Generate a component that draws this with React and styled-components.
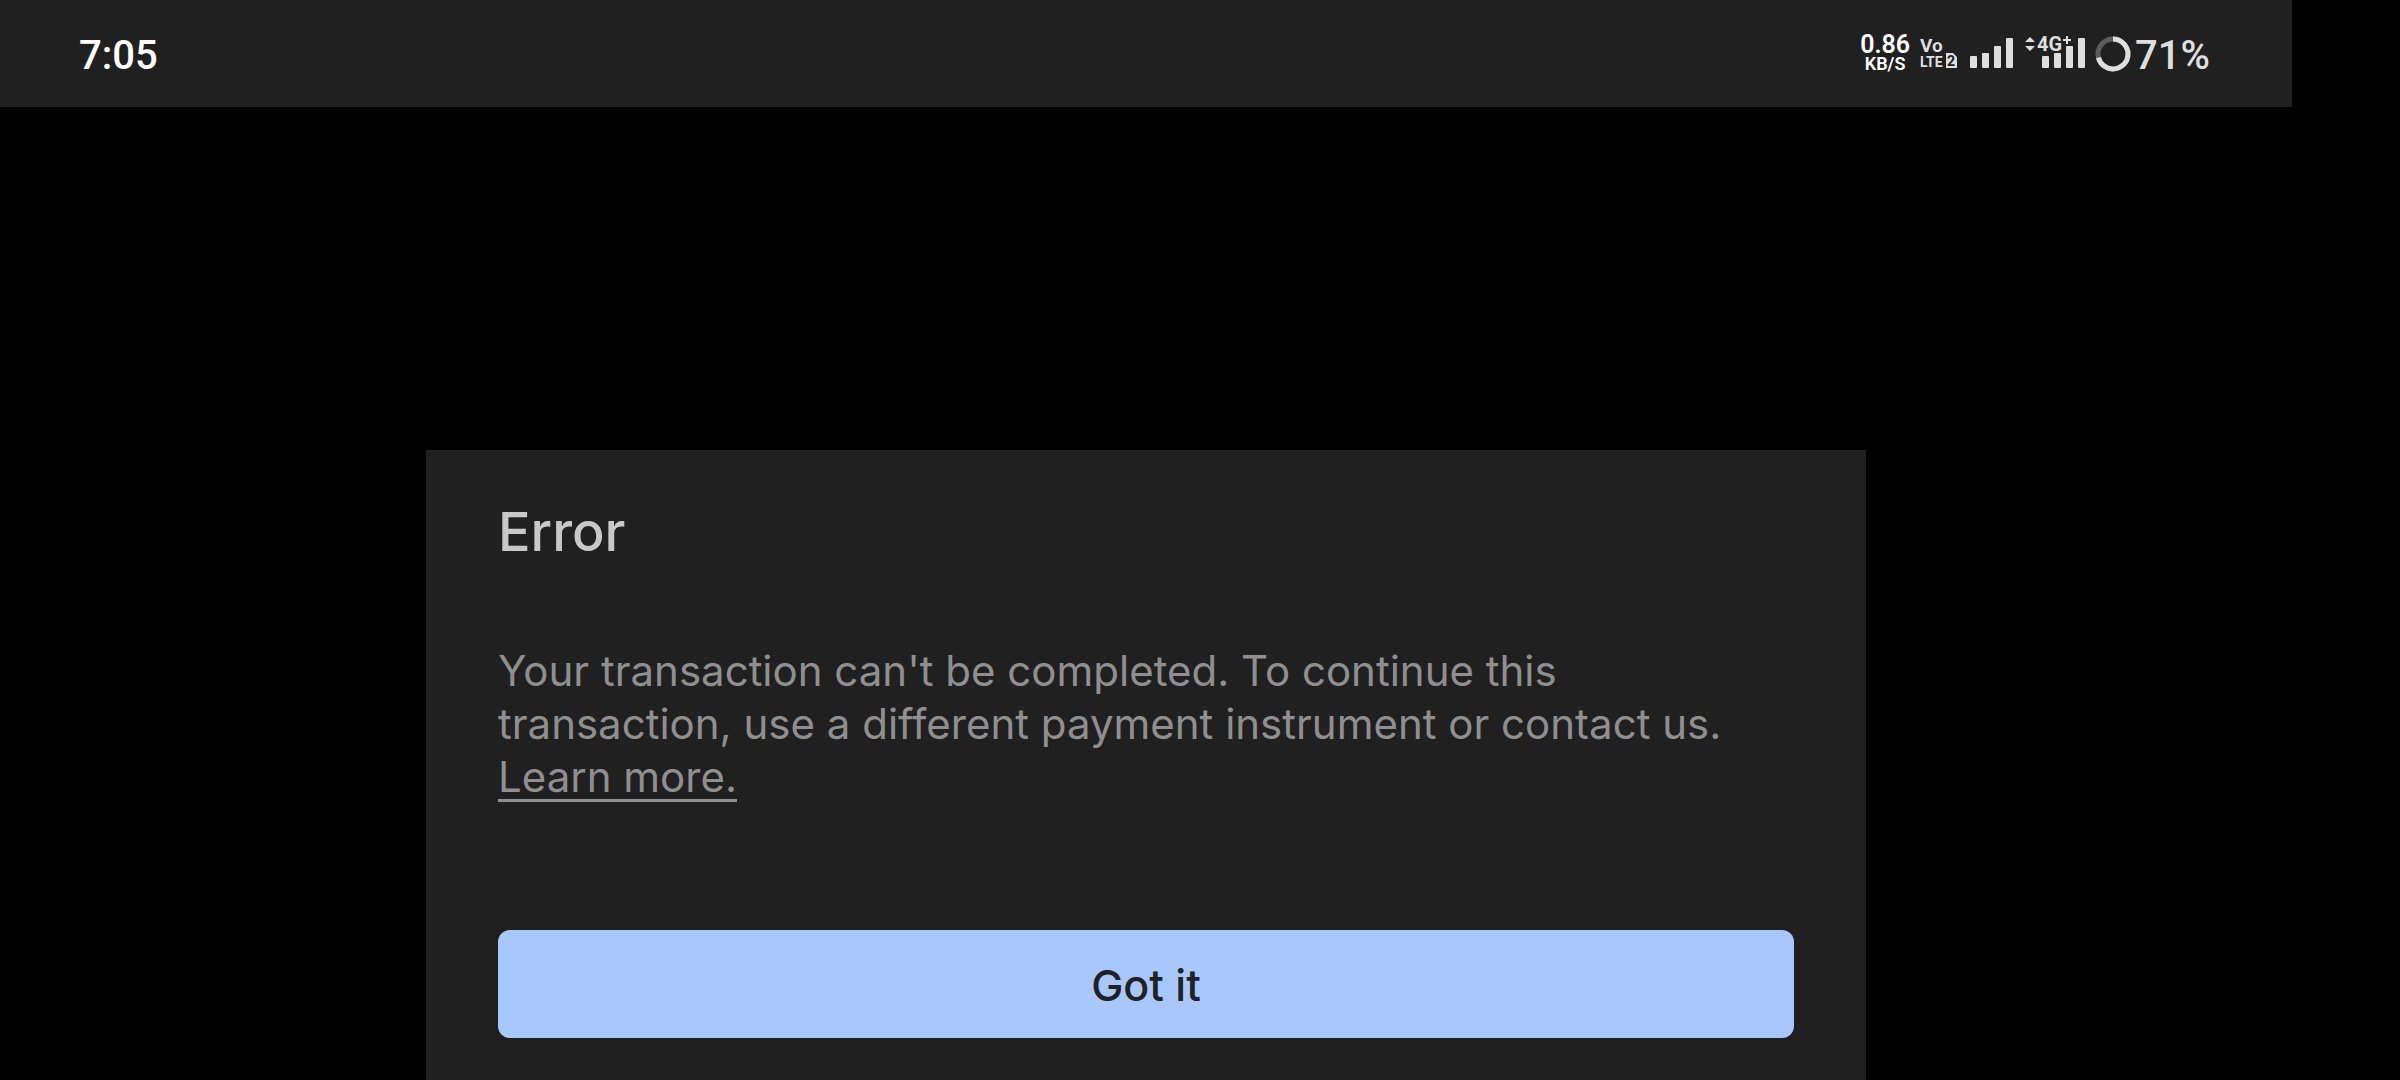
import React from 'react';
import styled, { createGlobalStyle } from 'styled-components';

const GlobalStyle = createGlobalStyle`
  * {
    box-sizing: border-box;
  }

  body {
    margin: 0;
    background: #000;
    font-family: Roboto, 'Liberation Sans', sans-serif;
  }
`;

const Screen = styled.div`
  display: flex;
  flex-direction: column;
  min-height: 100vh;
  padding-right: 108px;
  background: #000;
`;

const StatusBar = styled.header`
  display: flex;
  align-items: center;
  justify-content: space-between;
  height: 107px;
  padding: 5px 82px 0 79px;
  background: #202020;
`;

const Clock = styled.time`
  font-size: 40px;
  line-height: 48px;
  font-weight: 500;
  color: #fff;
`;

const StatusIcons = styled.div`
  display: flex;
  align-items: center;
  gap: 10px;
  color: #dedede;
`;

const Speed = styled.div`
  display: flex;
  flex-direction: column;
  align-items: center;
  padding-bottom: 4px;
  font-weight: 600;
  color: #fff;
`;

const SpeedValue = styled.span`
  font-size: 25px;
  line-height: 20px;
`;

const SpeedUnit = styled.span`
  font-size: 18px;
  line-height: 18px;
`;

const Glyph = styled.svg`
  display: block;
  flex: none;
  fill: currentColor;
`;

const GlyphText = styled.text`
  font-size: ${(props) => props.$size}px;
  font-weight: 700;
`;

const Battery = styled.div`
  display: flex;
  align-items: center;
  gap: 4px;
  font-size: 40px;
  line-height: 48px;
  font-weight: 500;
`;

const Main = styled.main`
  display: flex;
  flex: 1;
  justify-content: center;
  padding-top: 343px;
`;

const Dialog = styled.section`
  display: flex;
  flex-direction: column;
  width: 100%;
  max-width: 1440px;
  padding: 48px 72px 42px;
  background: #202020;
  font-family: Inter, Roboto, sans-serif;
`;

const Title = styled.h1`
  margin: 0 0 78px;
  font-size: 54px;
  line-height: 68px;
  font-weight: 500;
  color: #c8c8c8;
`;

const Message = styled.p`
  margin: 0 0 127px;
  font-size: 42px;
  line-height: 53px;
  color: #8f8f8f;
`;

const LearnMore = styled.a`
  color: inherit;
  text-decoration: underline;
  text-decoration-thickness: 3px;
  text-decoration-skip-ink: none;
  text-underline-offset: 7px;
`;

const ConfirmButton = styled.button`
  height: 108px;
  padding: 2px 24px 0;
  border: 0;
  border-radius: 12px;
  background: #a8c7fc;
  color: #202124;
  font-family: inherit;
  font-size: 43px;
  font-weight: 500;
  cursor: pointer;
`;

function VolteIcon() {
  return (
    <Glyph width="40" height="48" viewBox="0 0 40 48">
      <GlyphText $size={19} x="0" y="20">Vo</GlyphText>
      <GlyphText $size={14} x="0" y="35">LTE</GlyphText>
      <path d="M26 21h7l4 4v11H26z" />
      <GlyphText $size={14} x="27" y="34" fill="#202020">2</GlyphText>
    </Glyph>
  );
}

function Bars() {
  return (
    <>
      <rect x="0" y="24" width="7" height="12" rx="1" />
      <rect x="12" y="21" width="7" height="15" rx="1" />
      <rect x="24" y="14" width="7" height="22" rx="1" />
      <rect x="36" y="6" width="7" height="30" rx="1" />
    </>
  );
}

function SignalIcon() {
  return (
    <Glyph width="44" height="48" viewBox="0 0 44 48">
      <Bars />
    </Glyph>
  );
}

function DataSignalIcon() {
  return (
    <Glyph width="61" height="48" viewBox="0 0 61 48">
      <path d="M6 5l5 5H1zM1 14h10l-5 5z" />
      <g transform="translate(18 0)">
        <Bars />
      </g>
      <GlyphText $size={20} x="13" y="19">4G</GlyphText>
      <path d="M42 4h2v3h3v2h-3v3h-2V9h-3V7h3z" />
    </Glyph>
  );
}

function BatteryIcon() {
  return (
    <Glyph width="36" height="48" viewBox="0 0 36 48">
      <circle cx="18" cy="22" r="15" fill="none" stroke="#5c5c5c" strokeWidth="5" />
      <circle
        cx="18"
        cy="22"
        r="15"
        fill="none"
        stroke="currentColor"
        strokeWidth="5"
        pathLength="100"
        strokeDasharray="71 29"
        transform="rotate(-90 18 22)"
      />
    </Glyph>
  );
}

function App() {
  return (
    <>
      <GlobalStyle />
      <Screen>
        <StatusBar>
          <Clock>7:05</Clock>
          <StatusIcons>
            <Speed>
              <SpeedValue>0.86</SpeedValue>
              <SpeedUnit>KB/S</SpeedUnit>
            </Speed>
            <VolteIcon />
            <SignalIcon />
            <DataSignalIcon />
            <Battery>
              <BatteryIcon />
              <span>71%</span>
            </Battery>
          </StatusIcons>
        </StatusBar>
        <Main>
          <Dialog role="dialog" aria-labelledby="dialog-title">
            <Title id="dialog-title">Error</Title>
            <Message>
              Your transaction can't be completed. To continue this
              <br />
              transaction, use a different payment instrument or contact us.
              <br />
              <LearnMore href="#learn-more">Learn more.</LearnMore>
            </Message>
            <ConfirmButton type="button">Got it</ConfirmButton>
          </Dialog>
        </Main>
      </Screen>
    </>
  );
}

export default App;
